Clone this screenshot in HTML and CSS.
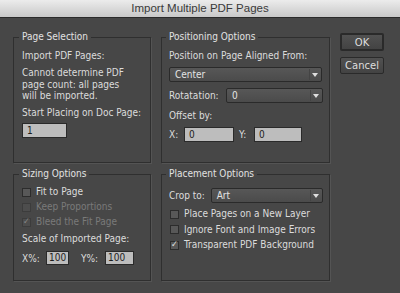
FILE: index.html
```html
<!DOCTYPE html>
<html>
<head>
  <title>Import Multiple PDF Pages</title>
  <link rel="stylesheet" href="styles.css">
</head>
<body>
  <div class="titlebar">Import Multiple PDF Pages</div>
  <div class="content">
    <div class="panels">
      <fieldset class="group page-selection">
        <legend>Page Selection</legend>
        <p class="row">Import PDF Pages:</p>
        <p class="row note">Cannot determine PDF<br>page count: all pages<br>will be imported.</p>
        <p class="row">Start Placing on Doc Page:</p>
        <div class="field start-page">1</div>
      </fieldset>

      <fieldset class="group positioning">
        <legend>Positioning Options</legend>
        <p class="row">Position on Page Aligned From:</p>
        <div class="select aligned">Center</div>
        <div class="inline rotation">
          <span>Rotatation:</span>
          <div class="select rotate">0</div>
        </div>
        <p class="row offset-label">Offset by:</p>
        <div class="inline offset">
          <span class="axis">X:</span>
          <div class="field offset-x">0</div>
          <span class="axis">Y:</span>
          <div class="field offset-y">0</div>
        </div>
      </fieldset>

      <fieldset class="group sizing">
        <legend>Sizing Options</legend>
        <label class="check"><span class="box"></span>Fit to Page</label>
        <label class="check disabled"><span class="box"></span>Keep Proportions</label>
        <label class="check disabled checked"><span class="box"></span>Bleed the Fit Page</label>
        <p class="row scale-label">Scale of Imported Page:</p>
        <div class="inline scale">
          <span>X%:</span>
          <div class="field scale-x">100</div>
          <span class="y-label">Y%:</span>
          <div class="field scale-y">100</div>
        </div>
      </fieldset>

      <fieldset class="group placement">
        <legend>Placement Options</legend>
        <div class="inline crop">
          <span>Crop to:</span>
          <div class="select crop-select">Art</div>
        </div>
        <label class="check"><span class="box"></span>Place Pages on a New Layer</label>
        <label class="check"><span class="box"></span>Ignore Font and Image Errors</label>
        <label class="check checked"><span class="box"></span>Transparent PDF Background</label>
      </fieldset>
    </div>

    <div class="buttons">
      <button class="btn default">OK</button>
      <button class="btn">Cancel</button>
    </div>
  </div>
</body>
</html>
```

FILE: styles.css
```css
body {
  margin: 0;
  background-color: #474747;
  font-family: "DejaVu Sans Condensed", "DejaVu Sans", sans-serif;
  font-size: 10px;
  color: #dcdcdc;
  height: 293px;
  overflow: hidden;
}

.titlebar {
  height: 17px;
  line-height: 17px;
  text-align: center;
  font-family: "Liberation Sans", sans-serif;
  font-size: 11.5px;
  color: #3a3a3a;
  background: linear-gradient(#ececec, #c8c8c8);
  border-bottom: 1px solid #2a2a2a;
}

.content {
  display: flex;
  padding: 13px 0 0 13px;
}

.panels {
  display: grid;
  grid-template-columns: 138px 169px;
  grid-template-rows: 132px 113px;
  column-gap: 10px;
  row-gap: 5px;
}

.group {
  margin: 0;
  padding: 7px 6px 0 8px;
  border: 1px solid #2f2f2f;
  box-shadow: 1px 1px 0 #545454;
  min-width: 0;
}

.group legend {
  padding: 0 3px;
  margin-left: -3px;
  line-height: 12px;
  color: #e2e2e2;
}

.positioning,
.placement {
  padding-left: 7px;
}

.row {
  margin: 0;
  line-height: 12px;
}

.note {
  margin-top: 5px;
  line-height: 11.5px;
}

.page-selection .row:nth-of-type(3) {
  margin-top: 5px;
}

.field {
  height: 13px;
  line-height: 13px;
  padding: 0 0 0 4px;
  background-color: #bdbdbd;
  border: 1px solid #2a2a2a;
  color: #1e1e1e;
  box-sizing: content-box;
}

.start-page {
  width: 39px;
  margin-top: 4px;
}

.select {
  position: relative;
  height: 13px;
  line-height: 13px;
  padding-left: 5px;
  border: 1px solid #2a2a2a;
  border-radius: 2px;
  background: linear-gradient(#575757, #4b4b4b);
  color: #e4e4e4;
}

.select::after {
  content: "";
  position: absolute;
  right: 3px;
  top: 5px;
  border-left: 3px solid transparent;
  border-right: 3px solid transparent;
  border-top: 4px solid #dedede;
}

.select::before {
  content: "";
  position: absolute;
  right: 11px;
  top: 1px;
  bottom: 1px;
  border-left: 1px solid #444;
}

.aligned {
  width: 146px;
  margin-top: 5px;
}

.inline {
  display: flex;
  align-items: center;
}

.rotation {
  margin-top: 6px;
}

.rotation span {
  width: 57px;
}

.rotate {
  width: 90px;
}

.offset-label {
  margin-top: 7px;
}

.offset {
  margin-top: 5px;
}

.offset .axis {
  width: 15px;
}

.offset-x {
  width: 44px;
  margin-right: 5px;
}

.offset-y {
  width: 42px;
}

.check {
  display: flex;
  align-items: center;
  line-height: 12px;
  margin-bottom: 3px;
}

.check .box {
  position: relative;
  width: 7px;
  height: 7px;
  margin-right: 5px;
  background-color: #585858;
  border: 1px solid #2c2c2c;
}

.check.checked .box::after {
  content: "\2713";
  position: absolute;
  left: 0;
  top: -4px;
  font-size: 9px;
  line-height: 12px;
  color: #e0e0e0;
}

.check.disabled {
  color: #7a7a7a;
}

.check.disabled .box {
  background-color: #4d4d4d;
  border-color: #3c3c3c;
}

.check.disabled .box::after {
  color: #858585;
}

.sizing {
  padding-top: 6px;
}

.scale-label {
  margin-top: 5px;
}

.scale {
  margin-top: 6px;
}

.scale span {
  width: 24px;
}

.scale .y-label {
  width: 24px;
  margin-left: 12px;
}

.scale .field {
  height: 12px;
  line-height: 12px;
  padding-left: 2px;
}

.scale-x {
  width: 19px;
}

.scale-y {
  width: 25px;
  padding-left: 4px;
}

.placement {
  padding-top: 8px;
}

.crop span {
  width: 42px;
}

.crop-select {
  width: 106px;
}

.crop {
  margin-bottom: 5px;
}

.placement .check {
  margin-bottom: 3.5px;
  margin-left: 1px;
}

.buttons {
  display: flex;
  flex-direction: column;
  gap: 6px;
  margin-left: 10px;
  padding-top: 2px;
}

.btn {
  width: 44px;
  height: 17px;
  padding: 0;
  font-family: "DejaVu Sans", sans-serif;
  font-size: 10px;
  color: #dedede;
  background: linear-gradient(#515151, #434343);
  border: 1px solid #2a2a2a;
  border-radius: 2px;
}

.btn.default {
  height: 18px;
  border: 2px solid #2a2a2a;
}
```
